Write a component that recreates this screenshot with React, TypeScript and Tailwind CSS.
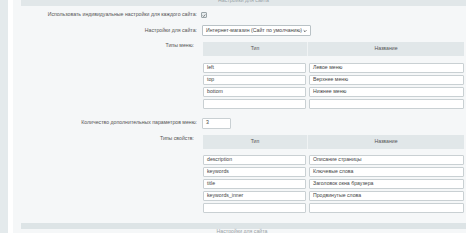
import React from "react";

const Input = ({ v, w, h = "h-[10px]" }: { v?: string; w: string; h?: string }) => (
  <div className={`${w} ${h} bg-white border border-[#c9d0d3] rounded-[1px] px-[3px] flex items-center text-[5.2px] text-[#444] leading-none whitespace-nowrap`}>
    {v}
  </div>
);

const Table = ({ rows }: { rows: [string, string][] }) => (
  <div className="flex flex-col w-[261px]">
    <div className="flex h-[14px] bg-[#e1e7e9] text-[5.2px] text-[#555] mb-[6.5px]">
      <div className="w-[105px] flex items-center justify-center border-r border-[#f0f3f4]">Тип</div>
      <div className="flex-1 flex items-center justify-center">Название</div>
    </div>
    <div className="flex flex-col gap-[2px]">
      {rows.map((r, i) => (
        <div key={i} className="flex gap-[3px]">
          <Input v={r[0]} w="w-[103px]" />
          <Input v={r[1]} w="w-[155px]" />
        </div>
      ))}
    </div>
  </div>
);

export default function App() {
  return (
    <div
      className="w-[474px] h-[233px] overflow-hidden bg-white flex text-[#333]"
      style={{ fontFamily: '"Liberation Sans", Arial, sans-serif' }}
    >
      <div className="w-[8px] bg-[#e4eaec]" />
      <div className="w-[5px] bg-white" />
      <div className="w-[453px] bg-[#f5f7f8] flex flex-col">
        <div className="ml-[8px] h-[6px] shrink-0 bg-[#e1e7e9] flex justify-center items-start overflow-hidden">
          <span className="text-[5.2px] text-[#9aa3a7] leading-none -translate-y-[2px]">Настройки для сайта</span>
        </div>
        <div className="flex flex-col text-[5.2px] text-[#555] leading-none whitespace-nowrap">
          <div className="flex items-center h-[6px] mt-[6px]">
            <div className="w-[185px] text-right pr-[1px]">Использовать индивидуальные настройки для каждого сайта:</div>
            <div className="ml-[3px] w-[6px] h-[6px] bg-[#e6ecee] border border-[#9aa4a8] rounded-[1px] flex items-center justify-center">
              <svg viewBox="0 0 6 6" className="w-[5px] h-[5px]"><path d="M1 3 L2.5 4.5 L5 1.5" stroke="#444" strokeWidth="0.9" fill="none" /></svg>
            </div>
          </div>
          <div className="flex items-center mt-[7px] h-[11px]">
            <div className="w-[185px] text-right pr-[1px]">Настройки для сайта:</div>
            <div className="ml-[4px] w-[109px] h-[11px] bg-white border border-[#b9c2c6] rounded-[1px] flex items-center justify-between px-[3px] text-[#444]">
              <span>Интернет-магазин (Сайт по умолчанию)</span>
              <svg viewBox="0 0 6 6" className="w-[4px] h-[4px]"><path d="M1 2 L3 4 L5 2" stroke="#333" strokeWidth="1.2" fill="none" /></svg>
            </div>
          </div>
          <div className="flex mt-[6px]">
            <div className="w-[185px] text-right pr-[4px] pt-[1px]">Типы меню:</div>
            <div className="ml-[5px]">
              <Table rows={[["left", "Левое меню"], ["top", "Верхнее меню"], ["bottom", "Нижнее меню"], ["", ""]]} />
            </div>
          </div>
          <div className="flex items-center mt-[9px] h-[11px]">
            <div className="w-[185px] text-right pr-[1px]">Количество дополнительных параметров меню:</div>
            <div className="ml-[4px]"><Input v="3" w="w-[29px]" h="h-[11px]" /></div>
          </div>
          <div className="flex mt-[6px]">
            <div className="w-[185px] text-right pr-[4px] pt-[1px]">Типы свойств:</div>
            <div className="ml-[5px]">
              <Table rows={[["description", "Описание страницы"], ["keywords", "Ключевые слова"], ["title", "Заголовок окна браузера"], ["keywords_inner", "Продвинутые слова"], ["", ""]]} />
            </div>
          </div>
        </div>
        <div className="ml-[8px] h-[6px] shrink-0 bg-[#dde4e6] mt-[10px]" />
      </div>
      <div className="flex-1 bg-white" />
      <div className="absolute left-[0px] top-[229px] w-[474px] flex justify-center pl-[10px] pointer-events-none">
        <span className="text-[5.2px] text-[#9aa3a7] leading-none" style={{ fontFamily: '"Liberation Sans", Arial, sans-serif' }}>Настройки для сайта</span>
      </div>
    </div>
  );
}
